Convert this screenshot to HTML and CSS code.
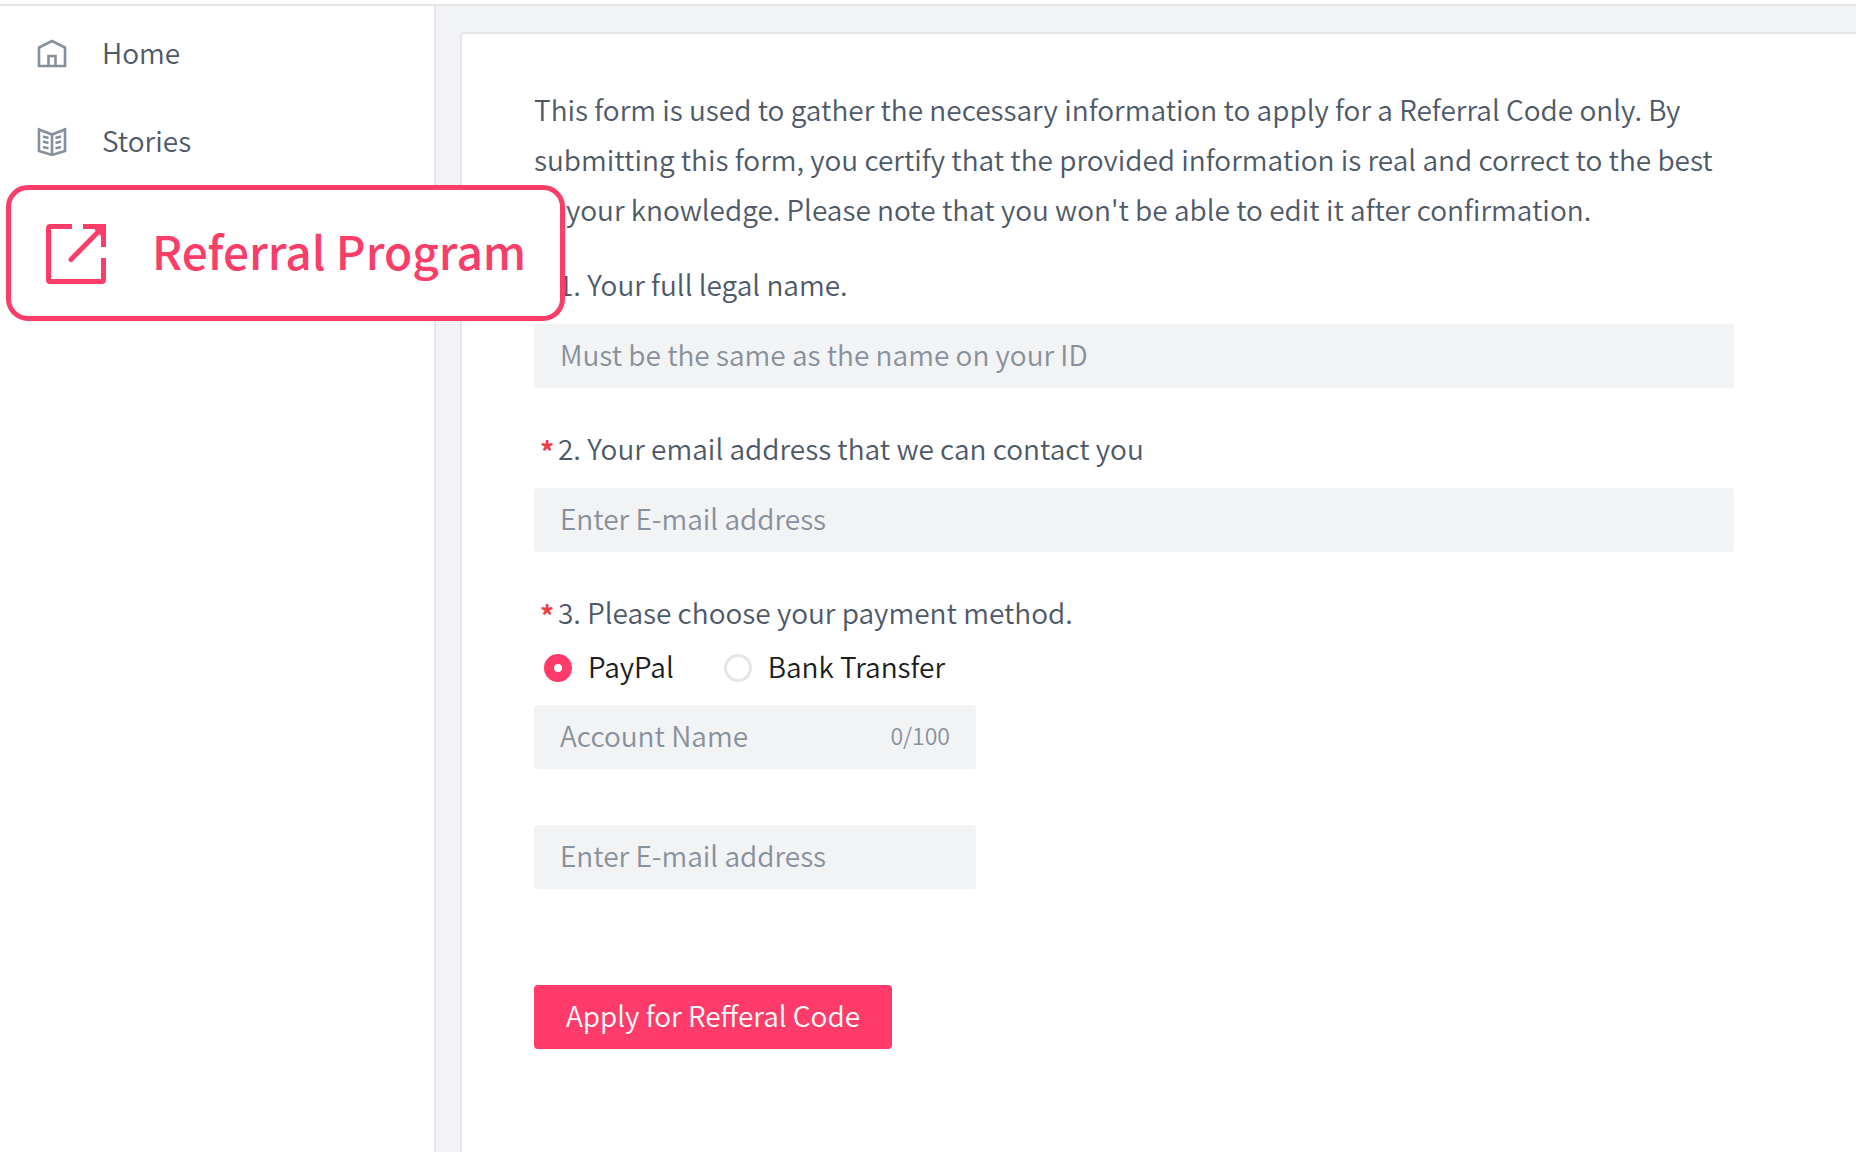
FILE: index.html
```html
<!DOCTYPE html>
<html lang="en">
<head>
<meta charset="utf-8">
<title>Referral Program</title>
<link rel="stylesheet" href="styles.css">
</head>
<body>
<header class="topbar"></header>
<div class="layout">
  <nav class="sidebar">
    <a class="nav-item" href="#">
      <svg class="nav-icon" viewBox="0 0 30 30" fill="none" stroke="currentColor" stroke-width="2.6"><path d="M2 27V8.500L15 2 28 8.500V27z"/><path d="M11.500 27V17h7v10"/></svg>
      <span>Home</span>
    </a>
    <a class="nav-item" href="#">
      <svg class="nav-icon" viewBox="0 0 30 30" fill="none" stroke="currentColor" stroke-width="2.6"><path d="M2 2.500 15 7.500 28 2.500V24L15 28 2 24zM15 8V28"/><path d="M6 9.500l5.500 1.500M6 14.500l5.500 1.500M6 20l5.500 1.200M24 9.500l-5.500 1.500M24 14.500l-5.500 1.500M24 20l-5.500 1.200"/></svg>
      <span>Stories</span>
    </a>
    <a class="nav-callout" href="#">
      <svg class="callout-icon" viewBox="0 0 60 60" fill="none" stroke="currentColor" stroke-width="5"><path d="M26 2.500H4Q2.500 2.500 2.500 4V56Q2.500 57.500 4 57.500H56Q57.500 57.500 57.500 56V34"/><path d="M37 2.500H57.500V23"/><path d="M56 4 25 35.500" stroke-linecap="round"/><path d="M46 3H58V15z" fill="currentColor" stroke="none"/></svg>
      <span>Referral Program</span>
    </a>
  </nav>
  <main class="content">
    <form class="card">
      <p class="intro">This form is used to gather the necessary information to apply for a Referral Code only. By<br>submitting this form, you certify that the provided information is real and correct to the best<br>of your knowledge. Please note that you won't be able to edit it after confirmation.</p>
      <div class="field">
        <label class="question" for="name"><span class="star">*</span>1. Your full legal name.</label>
        <input class="box" id="name" type="text" placeholder="Must be the same as the name on your ID">
      </div>
      <div class="field">
        <label class="question" for="email"><span class="star">*</span>2. Your email address that we can contact you</label>
        <input class="box" id="email" type="email" placeholder="Enter E-mail address">
      </div>
      <fieldset class="payment">
        <legend class="question"><span class="star">*</span>3. Please choose your payment method.</legend>
        <div class="options">
          <label class="option"><input class="radio" type="radio" name="method" checked><span>PayPal</span></label>
          <label class="option"><input class="radio" type="radio" name="method"><span>Bank Transfer</span></label>
        </div>
        <div class="box account">
          <input class="account-input" type="text" maxlength="100" aria-label="Account Name" placeholder="Account Name">
          <span class="count">0/100</span>
        </div>
        <input class="box short" type="email" aria-label="PayPal e-mail address" placeholder="Enter E-mail address">
      </fieldset>
      <button class="submit" type="button">Apply for Refferal Code</button>
    </form>
  </main>
</div>
</body>
</html>
```
FILE: styles.css
```css
* { box-sizing: border-box; }
body {
  margin: 0;
  min-height: 100vh;
  display: flex;
  flex-direction: column;
  background: #fff;
  color: #4e5967;
  font: 350 28px/50px "Noto Sans CJK SC", "Noto Sans", sans-serif;
}
input, button { font: inherit; color: inherit; }
.topbar { height: 6px; border-bottom: 2px solid #e4e5e7; }
.layout { flex: 1; display: flex; }
.sidebar {
  position: relative;
  flex: 0 0 436px;
  padding: 4px 0;
  border-right: 2px solid #e4e6e9;
}
.nav-item {
  display: flex;
  align-items: center;
  gap: 35px;
  height: 88px;
  padding-left: 37px;
  color: inherit;
  text-decoration: none;
}
.nav-item span, .option span { padding-bottom: 4px; }
.nav-icon { width: 30px; height: 30px; color: #85909c; }
.nav-callout {
  position: absolute;
  top: 179px;
  left: 6px;
  display: flex;
  align-items: center;
  gap: 46px;
  width: 559px;
  height: 136px;
  padding: 2px 0 0 35px;
  border: 5px solid #fa3e69;
  border-radius: 22px;
  background: #fff;
  color: #fa3e69;
  font-size: 46px;
  font-weight: 500;
  text-decoration: none;
  white-space: nowrap;
}
.nav-callout span { padding-bottom: 8px; }
.callout-icon { flex: none; width: 60px; height: 60px; }
.content {
  flex: 1;
  min-width: 0;
  display: flex;
  padding: 26px 0 0 24px;
  background: #f2f3f5;
}
.card {
  flex: 1;
  min-width: 0;
  padding: 50px 72px;
  border: 2px solid #e4e6e9;
  border-width: 2px 0 0 2px;
  border-radius: 4px 0 0 0;
  background: #fff;
}
.intro { margin: 0 0 25px; white-space: nowrap; }
.field { max-width: 1200px; margin-bottom: 35px; }
.question { display: flex; margin: 0; padding: 0 0 15px 6px; }
.star {
  width: 18px;
  height: 50px;
  color: #ee4040;
  font-weight: 700;
  line-height: 56px;
}
.box {
  display: block;
  width: 100%;
  height: 64px;
  padding: 0 26px 4px;
  border: 0;
  border-radius: 4px;
  background: #f2f3f5;
}
.box::placeholder, .account-input::placeholder { color: #87909b; opacity: 1; }
.payment { margin: 0 0 96px; padding: 0; border: 0; }
.payment .question { padding-bottom: 6px; }
.options { display: flex; gap: 50px; padding: 0 0 12px 10px; color: #1c1d20; }
.option { display: flex; align-items: center; gap: 16px; height: 50px; }
.radio {
  appearance: none;
  width: 28px;
  height: 28px;
  margin: 0;
  border: 3px solid #e4e6e9;
  border-radius: 50%;
  background: #fff;
}
.radio:checked { border: 10px solid #ff3c69; }
.account {
  display: flex;
  align-items: center;
  width: 442px;
  margin-bottom: 56px;
}
.account-input {
  flex: 1;
  min-width: 0;
  padding: 0;
  border: 0;
  background: none;
}
.count { color: #87909b; font-size: 23px; }
.short { width: 442px; }
.submit {
  height: 64px;
  padding: 0 32px 4px;
  border: 0;
  border-radius: 4px;
  background: #ff3c69;
  color: #fff;
}
```
